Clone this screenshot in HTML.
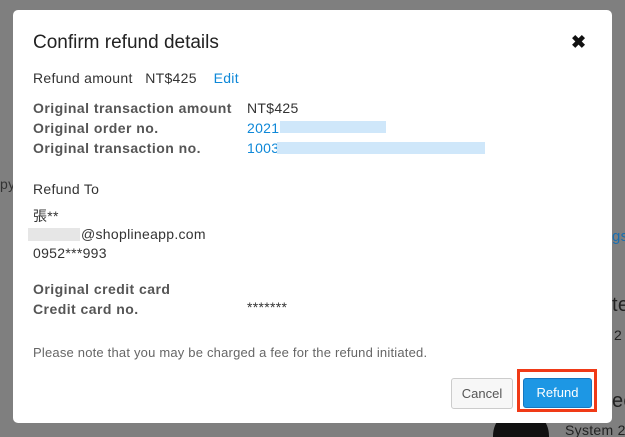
<!DOCTYPE html>
<html><head><meta charset="utf-8"><style>
*{margin:0;padding:0;box-sizing:border-box}
html,body{width:625px;height:437px;overflow:hidden}
body{background:#7f7f7f;font-family:"Liberation Sans","Noto Sans CJK TC",sans-serif;color:#333;font-size:14px;letter-spacing:0.3px}
#w{position:relative;width:625px;height:437px;overflow:hidden}
.a{position:absolute;white-space:nowrap}
.m{position:absolute;left:13px;top:10px;width:599px;height:413px;background:#fff;border-radius:5px}
.b{font-weight:bold;color:#555;letter-spacing:0.45px}
.l{color:#0e88d8}
.blur{position:absolute;background:#cfe7fa}
</style></head><body><div id="w">
<div class="a" style="left:0;top:176px;color:#333;font-size:14px">py</div>
<div class="a" style="left:612px;top:228px;color:#1a6fb0;font-size:15px">gs</div>
<div class="a" style="left:612px;top:294px;color:#222;font-size:20px">te</div>
<div class="a" style="left:614px;top:327px;color:#222;font-size:14px">2</div>
<div class="a" style="left:612px;top:390px;color:#222;font-size:20px;line-height:22px">ec</div>
<div class="a" style="left:565px;top:424px;height:13px;overflow:hidden;color:#222;font-size:14px;line-height:13px">System 20</div>
<div class="a" style="left:493px;top:408px;width:56px;height:29px;border-radius:28px 28px 0 0;background:#111"></div>
<div class="m">
<div class="a" style="left:20px;top:22px;font-size:19px;color:#222;letter-spacing:0">Confirm refund details</div>
<div class="a" style="left:558px;top:22px;font-size:18px;font-weight:bold;color:#111">✖</div>
<div class="a" style="left:20px;top:60px">Refund amount&nbsp;&nbsp;&nbsp;NT$425&nbsp;&nbsp;&nbsp;&nbsp;<span class="l">Edit</span></div>
<div class="a b" style="left:20px;top:90px">Original transaction amount</div>
<div class="a b" style="left:20px;top:110px">Original order no.</div>
<div class="a b" style="left:20px;top:130px">Original transaction no.</div>
<div class="a" style="left:234px;top:90px">NT$425</div>
<div class="a l" style="left:234px;top:110px">2021</div>
<div class="blur" style="left:267px;top:111px;width:106px;height:12px"></div>
<div class="a l" style="left:234px;top:130px">1003</div>
<div class="blur" style="left:264px;top:132px;width:208px;height:12px"></div>
<div class="a" style="left:20px;top:171px">Refund To</div>
<div class="a" style="left:20px;top:196px">張**</div>
<div class="a" style="left:68px;top:216px">@shoplineapp.com</div>
<div class="blur" style="left:15px;top:218px;width:52px;height:13px;background:#e6e6e6"></div>
<div class="a" style="left:20px;top:235px">0952***993</div>
<div class="a b" style="left:20px;top:271px">Original credit card</div>
<div class="a b" style="left:20px;top:291px">Credit card no.</div>
<div class="a" style="left:234px;top:289px">*******</div>
<div class="a" style="left:20px;top:335px;font-size:13px;color:#666;letter-spacing:0.2px">Please note that you may be charged a fee for the refund initiated.</div>
<div class="a" style="left:438px;top:368px;width:62px;height:31px;border:1px solid #ccc;border-radius:3px;background:#f7f7f7;color:#555;font-size:13px;text-align:center;line-height:29px;letter-spacing:0">Cancel</div>
<div class="a" style="left:504px;top:359px;width:80px;height:43px;border:3px solid #f03a17"></div>
<div class="a" style="left:510px;top:368px;width:69px;height:30px;border:1px solid #1577c0;border-radius:3px;background:#1d97e4;color:#fff;font-size:13px;text-align:center;line-height:28px;letter-spacing:0">Refund</div>
</div>
</div></body></html>
